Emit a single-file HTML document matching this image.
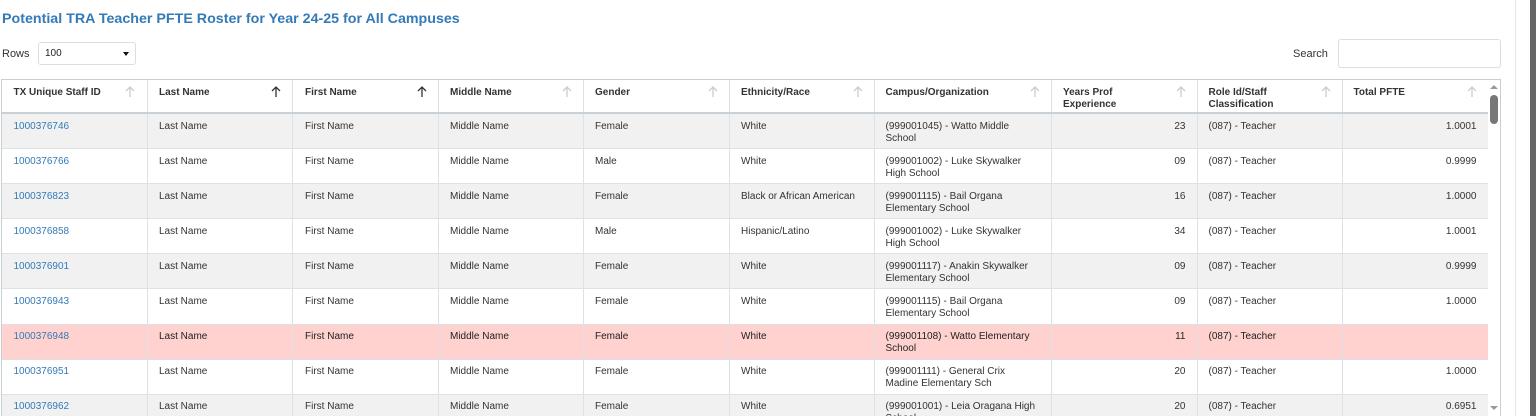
<!DOCTYPE html>
<html><head><meta charset="utf-8">
<style>
*{box-sizing:border-box}
html,body{margin:0;padding:0;width:1536px;height:416px;overflow:hidden;background:#fff;font-family:"Liberation Sans",sans-serif;color:#333}
#title{position:absolute;left:2px;top:10px;font-size:14.25px;line-height:18px;font-weight:bold;color:#337ab7;white-space:nowrap}
#rows{position:absolute;left:2px;top:47px;font-size:11px;line-height:14px}
#sel{position:absolute;left:38px;top:42px;width:98px;height:23px;border:1px solid #ddd;border-radius:3px;font-size:10px;line-height:22px;padding-left:6px;color:#222}
#sel:after{content:"";position:absolute;left:84px;top:9px;border:3.5px solid transparent;border-top:4px solid #111;border-bottom:0}
#search{position:absolute;left:1293px;top:47px;font-size:11px;line-height:14px}
#si{position:absolute;left:1338px;top:39px;width:163px;height:29px;border:1px solid #ddd;border-radius:3px}
#box{position:absolute;left:1px;top:79px;width:1500px;height:337px;border:1px solid #c9ced3;border-bottom:0;overflow:hidden}
table{border-collapse:collapse;table-layout:fixed;width:1486px;position:absolute;left:0;top:0;font-size:10px;line-height:12px}
td,th{border-right:1px solid #dde2e7;border-bottom:1px solid #dde2e7;padding:7px 11px 0 11.5px;vertical-align:top;text-align:left;overflow:hidden;white-space:nowrap}
th{height:33px;font-weight:bold;border-bottom:2px solid #c9d0d6;position:relative;padding-top:7px;padding-right:30px;color:#333;white-space:normal}
td:nth-child(3),th:nth-child(3){padding-left:12.5px}
td:nth-child(7),th:nth-child(7),td:nth-child(9),th:nth-child(9),td:nth-child(10),th:nth-child(10){padding-left:11px}
tr.r td{height:35px}
tr.t td{height:36px}
tr.u td{padding-top:6px}
tr.g td{background:#f1f1f1}
tr.p td{background:#ffd2cf;color:#222}
td.n{text-align:right}
td a{color:#337ab7}
.a{position:absolute;right:11px;top:6px}
#sb{position:absolute;left:1486px;top:0;width:13px;height:337px;background:#fff}
#th{position:absolute;left:2px;top:15px;width:8px;height:29px;border-radius:4px;background:#777}
#u{position:absolute;left:2px;top:5px;border:4px solid transparent;border-bottom:4px solid #999;border-top:0}
#d{position:absolute;left:2px;top:326px;border:4px solid transparent;border-top:4px solid #999;border-bottom:0}
#rl{position:absolute;left:1515px;top:0;width:1px;height:416px;background:#e6e6e6}
#rb{position:absolute;left:1530px;top:0;width:6px;height:416px;background:#666}
</style></head><body>
<div id="title">Potential TRA Teacher PFTE Roster for Year 24-25 for All Campuses</div>
<div id="rows">Rows</div><div id="sel">100</div>
<div id="search">Search</div><div id="si"></div>
<div id="box">
<table>
<colgroup><col style="width:145px"><col style="width:145px"><col style="width:146px"><col style="width:145px"><col style="width:146px"><col style="width:145px"><col style="width:177px"><col style="width:146px"><col style="width:145px"><col style="width:146px"></colgroup>
<tr>
<th>TX Unique Staff ID<svg class="a" style="right:12px" width="10" height="11" viewBox="0 0 10 11"><path d="M5 11V1M1 5l4-4 4 4" fill="none" stroke="#ccc" stroke-width="1.3"/></svg></th>
<th>Last Name<svg class="a" width="10" height="11" viewBox="0 0 10 11"><path d="M5 11V1M1 5l4-4 4 4" fill="none" stroke="#333" stroke-width="1.3"/></svg></th>
<th>First Name<svg class="a" width="10" height="11" viewBox="0 0 10 11"><path d="M5 11V1M1 5l4-4 4 4" fill="none" stroke="#333" stroke-width="1.3"/></svg></th>
<th>Middle Name<svg class="a" width="10" height="11" viewBox="0 0 10 11"><path d="M5 11V1M1 5l4-4 4 4" fill="none" stroke="#ccc" stroke-width="1.3"/></svg></th>
<th>Gender<svg class="a" width="10" height="11" viewBox="0 0 10 11"><path d="M5 11V1M1 5l4-4 4 4" fill="none" stroke="#ccc" stroke-width="1.3"/></svg></th>
<th>Ethnicity/Race<svg class="a" width="10" height="11" viewBox="0 0 10 11"><path d="M5 11V1M1 5l4-4 4 4" fill="none" stroke="#ccc" stroke-width="1.3"/></svg></th>
<th>Campus/Organization<svg class="a" width="10" height="11" viewBox="0 0 10 11"><path d="M5 11V1M1 5l4-4 4 4" fill="none" stroke="#ccc" stroke-width="1.3"/></svg></th>
<th>Years Prof Experience<svg class="a" width="10" height="11" viewBox="0 0 10 11"><path d="M5 11V1M1 5l4-4 4 4" fill="none" stroke="#ccc" stroke-width="1.3"/></svg></th>
<th>Role Id/Staff Classification<svg class="a" width="10" height="11" viewBox="0 0 10 11"><path d="M5 11V1M1 5l4-4 4 4" fill="none" stroke="#ccc" stroke-width="1.3"/></svg></th>
<th>Total PFTE<svg class="a" width="10" height="11" viewBox="0 0 10 11"><path d="M5 11V1M1 5l4-4 4 4" fill="none" stroke="#ccc" stroke-width="1.3"/></svg></th>
</tr>
<tr class="r g"><td><a>1000376746</a></td><td>Last Name</td><td>First Name</td><td>Middle Name</td><td>Female</td><td>White</td><td>(999001045) - Watto Middle<br>School</td><td class="n">23</td><td>(087) - Teacher</td><td class="n">1.0001</td></tr>
<tr class="r"><td><a>1000376766</a></td><td>Last Name</td><td>First Name</td><td>Middle Name</td><td>Male</td><td>White</td><td>(999001002) - Luke Skywalker<br>High School</td><td class="n">09</td><td>(087) - Teacher</td><td class="n">0.9999</td></tr>
<tr class="r g"><td><a>1000376823</a></td><td>Last Name</td><td>First Name</td><td>Middle Name</td><td>Female</td><td>Black or African American</td><td>(999001115) - Bail Organa<br>Elementary School</td><td class="n">16</td><td>(087) - Teacher</td><td class="n">1.0000</td></tr>
<tr class="r"><td><a>1000376858</a></td><td>Last Name</td><td>First Name</td><td>Middle Name</td><td>Male</td><td>Hispanic/Latino</td><td>(999001002) - Luke Skywalker<br>High School</td><td class="n">34</td><td>(087) - Teacher</td><td class="n">1.0001</td></tr>
<tr class="r g"><td><a>1000376901</a></td><td>Last Name</td><td>First Name</td><td>Middle Name</td><td>Female</td><td>White</td><td>(999001117) - Anakin Skywalker<br>Elementary School</td><td class="n">09</td><td>(087) - Teacher</td><td class="n">0.9999</td></tr>
<tr class="r t"><td><a>1000376943</a></td><td>Last Name</td><td>First Name</td><td>Middle Name</td><td>Female</td><td>White</td><td>(999001115) - Bail Organa<br>Elementary School</td><td class="n">09</td><td>(087) - Teacher</td><td class="n">1.0000</td></tr>
<tr class="r p u"><td><a>1000376948</a></td><td>Last Name</td><td>First Name</td><td>Middle Name</td><td>Female</td><td>White</td><td>(999001108) - Watto Elementary<br>School</td><td class="n">11</td><td>(087) - Teacher</td><td class="n"></td></tr>
<tr class="r u"><td><a>1000376951</a></td><td>Last Name</td><td>First Name</td><td>Middle Name</td><td>Female</td><td>White</td><td>(999001111) - General Crix<br>Madine Elementary Sch</td><td class="n">20</td><td>(087) - Teacher</td><td class="n">1.0000</td></tr>
<tr class="r g u"><td><a>1000376962</a></td><td>Last Name</td><td>First Name</td><td>Middle Name</td><td>Female</td><td>White</td><td>(999001001) - Leia Oragana High<br>School</td><td class="n">20</td><td>(087) - Teacher</td><td class="n">0.6951</td></tr>
</table>
<div id="sb"><div id="u"></div><div id="th"></div><div id="d"></div></div>
</div>
<div id="rl"></div><div id="rb"></div>
</body></html>
